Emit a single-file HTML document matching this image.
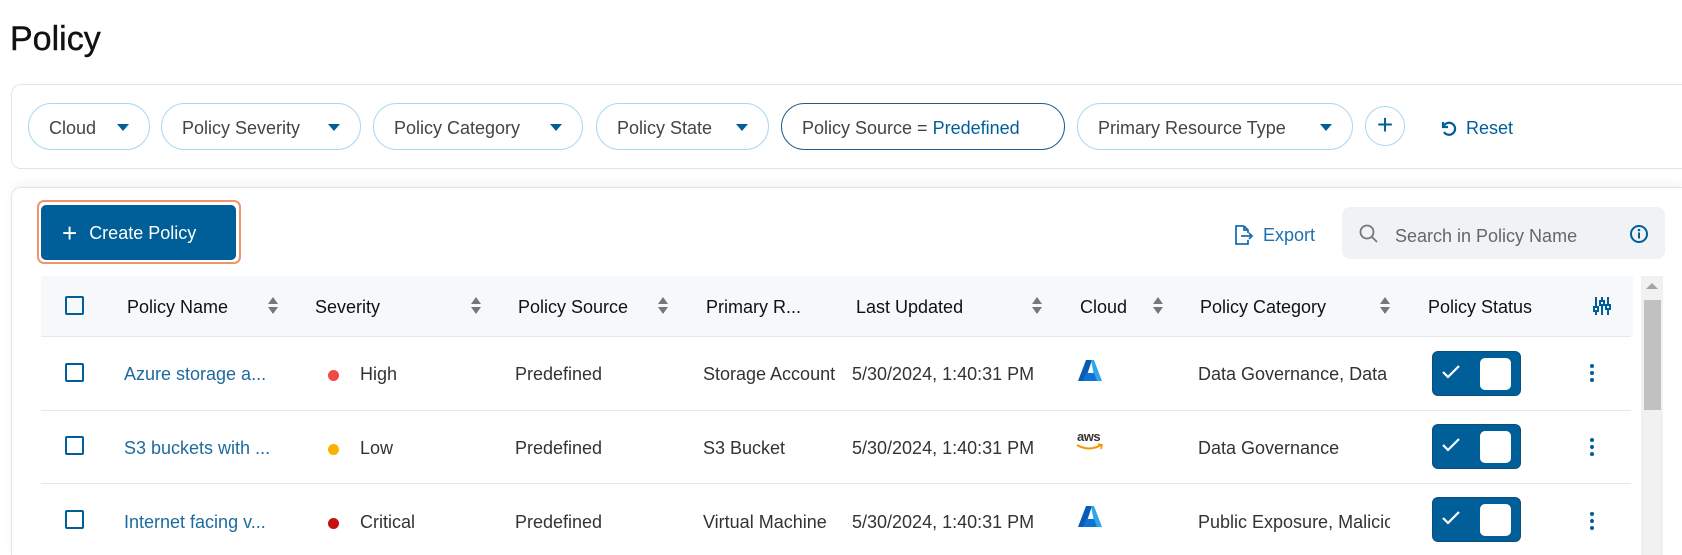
<!DOCTYPE html>
<html><head><meta charset="utf-8"><style>
*{box-sizing:border-box;margin:0;padding:0}
html,body{width:1682px;height:555px;overflow:hidden}
body{background:#fff;font-family:"Liberation Sans",sans-serif;color:#222;position:relative}
.a{position:absolute;white-space:nowrap}
.chip{position:absolute;top:103px;height:47px;border:1px solid #a9d8f5;border-radius:24px;font-size:18px;color:#444;line-height:48px;padding-left:20px}
.chip .tri{position:absolute;right:20px;top:20px;width:0;height:0;border-left:6px solid transparent;border-right:6px solid transparent;border-top:7px solid #005f99}
.hd{position:absolute;top:297px;font-size:18px;color:#111;white-space:nowrap}
.sort{position:absolute;top:297px;width:10px;height:18px}
.sort:before{content:"";position:absolute;left:0;top:0;border-left:5px solid transparent;border-right:5px solid transparent;border-bottom:7px solid #777}
.sort:after{content:"";position:absolute;left:0;top:10px;border-left:5px solid transparent;border-right:5px solid transparent;border-top:7px solid #777}
.cb{position:absolute;left:65px;width:19px;height:19px;border:2px solid #005f99;border-radius:2px}
.cell{position:absolute;font-size:18px;color:#333;white-space:nowrap;overflow:hidden}
.link{color:#1d6b9e}
.dot{position:absolute;left:328px;width:11px;height:11px;border-radius:50%}
.tog{position:absolute;left:1432px;width:89px;height:45px;background:#005f99;border-radius:6px;border:1px solid #0a4e7d}
.tog .k{position:absolute;right:9px;top:6px;width:31px;height:32px;background:#fff;border-radius:5px}
.tog svg{position:absolute;left:9px;top:13px}
.keb{position:absolute;left:1590px;width:4px}
.keb i{display:block;width:4px;height:4px;border-radius:50%;background:#005f99;margin-bottom:3px}
.line{position:absolute;left:41px;width:1590px;height:1px;background:#e5e9ee}
</style></head><body>
<div class="a" style="left:10px;top:20px;font-size:34px;color:#111;-webkit-text-stroke:0.4px #111">Policy</div>

<div class="a" style="left:11px;top:84px;width:1671px;height:85px;border:1px solid #e2e4e7;border-right:none;border-radius:10px 0 0 10px"></div>
<div class="chip" style="left:28px;width:122px">Cloud<span class="tri"></span></div>
<div class="chip" style="left:161px;width:200px">Policy Severity<span class="tri"></span></div>
<div class="chip" style="left:373px;width:210px">Policy Category<span class="tri"></span></div>
<div class="chip" style="left:596px;width:173px">Policy State<span class="tri"></span></div>
<div class="chip" style="left:781px;width:284px;border-color:#1f5e8c;color:#444">Policy Source = <span style="color:#005f99">Predefined</span></div>
<div class="chip" style="left:1077px;width:276px">Primary Resource Type<span class="tri"></span></div>
<div class="a" style="left:1365px;top:106px;width:40px;height:40px;border:1px solid #a9d8f5;border-radius:50%;color:#005f99;font-size:28px;line-height:36px;text-align:center">+</div>
<svg class="a" style="left:1439px;top:119px" width="18" height="18" viewBox="0 0 18 18"><path d="M4 3v5h5" fill="none" stroke="#005f99" stroke-width="2.2"/><path d="M4.5 7.5A6 6 0 1 1 5 13" fill="none" stroke="#005f99" stroke-width="2.2"/></svg>
<div class="a" style="left:1466px;top:118px;font-size:18px;color:#005f99">Reset</div>

<div class="a" style="left:11px;top:187px;width:1671px;height:368px;border:1px solid #e2e4e7;border-right:none;border-bottom:none;border-radius:10px 0 0 0;box-shadow:0 -4px 8px #f3f4f6"></div>
<div class="a" style="left:37px;top:200px;width:204px;height:64px;border:2px solid #f0956b;border-radius:7px"></div>
<div class="a" style="left:41px;top:205px;width:195px;height:55px;background:#005f99;border-radius:5px;color:#fff;font-size:18px;line-height:57px;padding-left:21px"><span style="font-size:26px;vertical-align:-3px;margin-right:12px">+</span>Create Policy</div>

<svg class="a" style="left:1232px;top:224px" width="22" height="22" viewBox="0 0 22 22"><path d="M12 2H4v18h12v-4M12 2l4 4v3M12 2v4h4" fill="none" stroke="#1d6fb0" stroke-width="1.8"/><path d="M9 12h11M17 9l3 3-3 3" fill="none" stroke="#1d6fb0" stroke-width="1.8"/></svg>
<div class="a" style="left:1263px;top:225px;font-size:18px;color:#1d6fb0">Export</div>
<div class="a" style="left:1342px;top:207px;width:323px;height:52px;background:#f0f2f5;border-radius:8px"></div>
<svg class="a" style="left:1359px;top:224px" width="20" height="20" viewBox="0 0 20 20"><circle cx="8" cy="8" r="6.5" fill="none" stroke="#777" stroke-width="1.8"/><path d="M13 13l5 5" stroke="#777" stroke-width="1.8"/></svg>
<div class="a" style="left:1395px;top:226px;font-size:18px;color:#666">Search in Policy Name</div>
<svg class="a" style="left:1629px;top:224px" width="20" height="20" viewBox="0 0 20 20"><circle cx="10" cy="10" r="8" fill="none" stroke="#005f99" stroke-width="2"/><rect x="9" y="8.5" width="2" height="6" fill="#005f99"/><circle cx="10" cy="6" r="1.3" fill="#005f99"/></svg>

<div class="a" style="left:41px;top:276px;width:1592px;height:60px;background:#f6f8fa"></div>
<div class="a" style="left:1641px;top:276px;width:22px;height:279px;background:#f1f1f1"></div>
<div class="a" style="left:1644px;top:300px;width:17px;height:110px;background:#c1c1c1"></div>
<div class="a" style="left:1646px;top:283px;border-left:6px solid transparent;border-right:6px solid transparent;border-bottom:6px solid #a3a3a3"></div>
<div class="cb" style="top:296px"></div>
<div class="hd" style="left:127px">Policy Name</div><div class="sort" style="left:268px"></div>
<div class="hd" style="left:315px">Severity</div><div class="sort" style="left:471px"></div>
<div class="hd" style="left:518px">Policy Source</div><div class="sort" style="left:658px"></div>
<div class="hd" style="left:706px">Primary R...</div>
<div class="hd" style="left:856px">Last Updated</div><div class="sort" style="left:1032px"></div>
<div class="hd" style="left:1080px">Cloud</div><div class="sort" style="left:1153px"></div>
<div class="hd" style="left:1200px">Policy Category</div><div class="sort" style="left:1380px"></div>
<div class="hd" style="left:1428px">Policy Status</div>
<svg class="a" style="left:1593px;top:296px" width="18" height="20" viewBox="0 0 18 20"><g stroke="#005f99" stroke-width="2" fill="none"><path d="M3 1v18M9 1v18M15 1v18"/><rect x="1" y="11" width="4" height="4" fill="#fff"/><rect x="7" y="5" width="4" height="4" fill="#fff"/><rect x="13" y="9" width="4" height="4" fill="#fff"/></g></svg>
<div class="line" style="top:336px"></div>
<div class="line" style="top:410px"></div>
<div class="line" style="top:483px"></div>

<div class="cb" style="top:363px"></div>
<div class="cell link" style="left:124px;top:364px">Azure storage a...</div>
<div class="dot" style="top:370px;background:#f04a45"></div>
<div class="cell" style="left:360px;top:364px">High</div>
<div class="cell" style="left:515px;top:364px">Predefined</div>
<div class="cell" style="left:703px;top:364px;width:134px">Storage Account</div>
<div class="cell" style="left:852px;top:364px">5/30/2024, 1:40:31 PM</div>
<svg class="a" style="left:1078px;top:360px" width="24" height="21" viewBox="0 0 24 21"><path d="M8 0h6l-7 21H0z" fill="#0a5bb5"/><path d="M13 0h3l8 21h-7z" fill="#2fa6ea"/><path d="M8 13h8l3 8H5z" fill="#0f74d1"/></svg>
<div class="cell" style="left:1198px;top:364px;width:192px">Data Governance, Data L</div>
<div class="tog" style="top:351px"><svg width="18" height="14" viewBox="0 0 18 14"><path d="M1 7l5 5L17 1" fill="none" stroke="#fff" stroke-width="2.2"/></svg><div class="k"></div></div>
<div class="keb" style="top:364px"><i></i><i></i><i></i></div>

<div class="cb" style="top:436px"></div>
<div class="cell link" style="left:124px;top:438px">S3 buckets with ...</div>
<div class="dot" style="top:444px;background:#fbb100"></div>
<div class="cell" style="left:360px;top:438px">Low</div>
<div class="cell" style="left:515px;top:438px">Predefined</div>
<div class="cell" style="left:703px;top:438px">S3 Bucket</div>
<div class="cell" style="left:852px;top:438px">5/30/2024, 1:40:31 PM</div>
<div class="a" style="left:1077px;top:429px;font-size:13px;color:#333;font-weight:bold;letter-spacing:-0.5px">aws</div>
<svg class="a" style="left:1076px;top:443px" width="28" height="8" viewBox="0 0 28 8"><path d="M1 2q12 7 24 0" fill="none" stroke="#f79400" stroke-width="2"/><path d="M22 1l4 1-1 4" fill="none" stroke="#f79400" stroke-width="1.6"/></svg>
<div class="cell" style="left:1198px;top:438px">Data Governance</div>
<div class="tog" style="top:424px"><svg width="18" height="14" viewBox="0 0 18 14"><path d="M1 7l5 5L17 1" fill="none" stroke="#fff" stroke-width="2.2"/></svg><div class="k"></div></div>
<div class="keb" style="top:438px"><i></i><i></i><i></i></div>

<div class="cb" style="top:510px"></div>
<div class="cell link" style="left:124px;top:512px">Internet facing v...</div>
<div class="dot" style="top:518px;background:#c4120e"></div>
<div class="cell" style="left:360px;top:512px">Critical</div>
<div class="cell" style="left:515px;top:512px">Predefined</div>
<div class="cell" style="left:703px;top:512px;width:134px">Virtual Machine</div>
<div class="cell" style="left:852px;top:512px">5/30/2024, 1:40:31 PM</div>
<svg class="a" style="left:1078px;top:506px" width="24" height="21" viewBox="0 0 24 21"><path d="M8 0h6l-7 21H0z" fill="#0a5bb5"/><path d="M13 0h3l8 21h-7z" fill="#2fa6ea"/><path d="M8 13h8l3 8H5z" fill="#0f74d1"/></svg>
<div class="cell" style="left:1198px;top:512px;width:192px">Public Exposure, Malicious</div>
<div class="tog" style="top:497px"><svg width="18" height="14" viewBox="0 0 18 14"><path d="M1 7l5 5L17 1" fill="none" stroke="#fff" stroke-width="2.2"/></svg><div class="k"></div></div>
<div class="keb" style="top:512px"><i></i><i></i><i></i></div>
</body></html>
